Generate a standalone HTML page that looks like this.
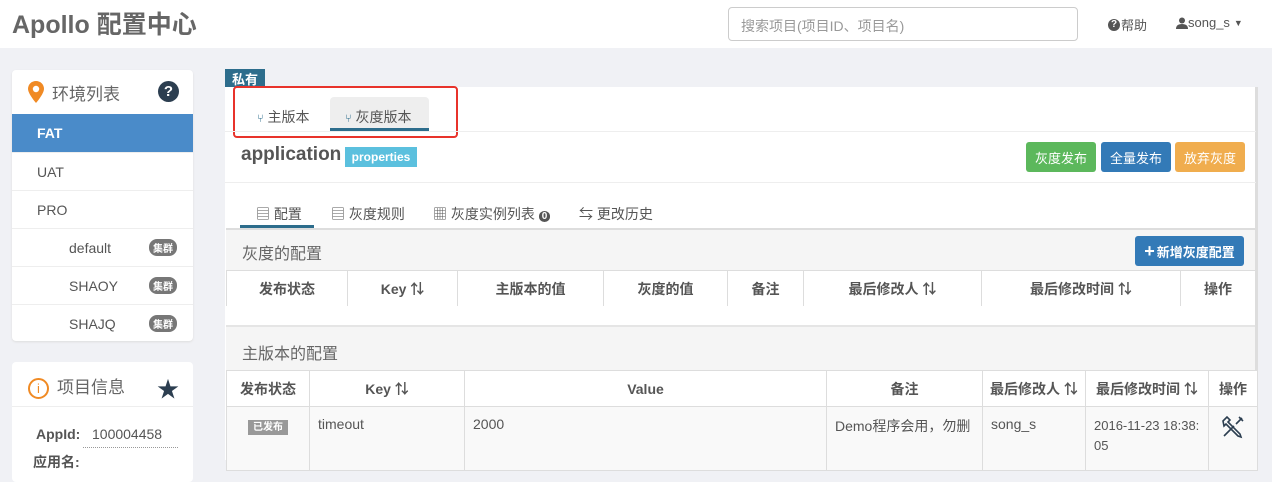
<!DOCTYPE html>
<html><head><meta charset="utf-8"><style>
*{box-sizing:border-box;margin:0;padding:0}
body{width:1272px;height:460px;overflow:hidden;background:#f0f1f5;font-family:"Liberation Sans","Noto Sans CJK SC",sans-serif;color:#555;position:relative;font-size:14px}
.a{position:absolute}
.hdr{left:0;top:0;width:1272px;height:48px;background:#fff}
.c{display:flex;align-items:center;justify-content:center}
.row{left:12px;width:181px;height:38px;border-top:1px solid #eee;display:flex;align-items:center;font-size:14px;color:#555}
.badge{background:#777;color:#fff;font-size:10px;border-radius:8px;padding:1px 4px;font-weight:bold;position:absolute;right:16px}
table{border-collapse:collapse;position:absolute;table-layout:fixed}
td{border:1px solid #ddd;font-size:14px;color:#555;text-align:center;vertical-align:middle}
th{border:1px solid #ddd;font-size:14px;color:#555;font-weight:bold;background:#fff;height:36px}
.btn{position:absolute;height:30px;color:#fff;font-size:13px;border-radius:3px;display:flex;align-items:center;justify-content:center}
</style></head><body>
<div class="a hdr"></div>
<div class="a" style="left:12px;top:5px;font-size:25px;font-weight:bold;color:#666">Apollo 配置中心</div>
<div class="a" style="left:728px;top:7px;width:350px;height:34px;border:1px solid #ccc;border-radius:4px;padding:8px 12px;font-size:14px;color:#999">搜索项目(项目ID、项目名)</div>
<div class="a" style="left:1108px;top:15px;font-size:13px;color:#555;display:flex;align-items:center"><span style="display:inline-block;width:12px;height:12px;border-radius:50%;background:#555;color:#fff;font-size:10px;font-weight:bold;text-align:center;line-height:12px;margin-right:1px">?</span>帮助</div>
<div class="a" style="left:1176px;top:15px;font-size:13px;color:#555;display:flex;align-items:center"><svg width="12" height="12" viewBox="0 0 12 12"><circle cx="6" cy="3.5" r="3" fill="#555"/><path d="M0 12 Q0 7 6 7 Q12 7 12 12Z" fill="#555"/></svg>song_s <span style="font-size:9px;margin-left:4px">▼</span></div>

<div class="a" style="left:12px;top:70px;width:181px;height:271px;background:#fff;border-radius:4px;box-shadow:0 1px 2px #ddd"></div>
<svg class="a" style="left:28px;top:81px" width="16" height="22" viewBox="0 0 16 22"><path d="M8 0C3.6 0 0 3.4 0 7.8 0 13 8 22 8 22S16 13 16 7.8C16 3.4 12.4 0 8 0Z" fill="#f08a24"/><circle cx="8" cy="8" r="3.2" fill="#fff"/></svg>
<div class="a" style="left:52px;top:80px;font-size:17px;color:#666">环境列表</div>
<div class="a c" style="left:158px;top:81px;width:21px;height:21px;border-radius:50%;background:#2c3e50;color:#fff;font-weight:bold;font-size:15px">?</div>
<div class="a row" style="top:114px;background:#4a8bc9;color:#fff;font-weight:bold;padding-left:25px;border:none">FAT</div>
<div class="a row" style="top:152px;padding-left:25px">UAT</div>
<div class="a row" style="top:190px;padding-left:25px">PRO</div>
<div class="a row" style="top:228px;padding-left:57px">default<span class="badge">集群</span></div>
<div class="a row" style="top:266px;padding-left:57px">SHAOY<span class="badge">集群</span></div>
<div class="a row" style="top:304px;padding-left:57px">SHAJQ<span class="badge">集群</span></div>

<div class="a" style="left:12px;top:362px;width:181px;height:120px;background:#fff;border-radius:4px"></div>
<div class="a" style="left:28px;top:373px;font-size:17px;color:#666"><span style="display:inline-block;width:21px;height:21px;border:2px solid #f08a24;border-radius:50%;color:#f08a24;font-size:13px;text-align:center;line-height:17px;margin-right:8px;vertical-align:middle">i</span>项目信息</div>
<div class="a" style="left:157px;top:372px;font-size:22px;color:#2c3e50">★</div>
<div class="a" style="left:12px;top:406px;width:181px;border-top:1px solid #eee"></div>
<div class="a" style="left:36px;top:426px;font-size:14px;color:#555"><b>AppId:</b>&nbsp;&nbsp; 100004458</div>
<div class="a" style="left:83px;top:447px;width:95px;border-top:1px dotted #999"></div>
<div class="a" style="left:33px;top:452px;font-size:14px;color:#555"><b>应用名:</b></div>

<div class="a c" style="left:225px;top:69px;width:40px;height:18px;background:#2d6d8c;color:#fff;font-size:13px;font-weight:bold">私有</div>
<div class="a" style="left:225px;top:87px;width:1033px;height:373px;background:#fff;border-right:3px solid #ddd"></div>
<div class="a" style="left:330px;top:97px;width:99px;height:34px;background:#eee;border-radius:4px 4px 0 0;border-bottom:3px solid #2d6d8c"></div>
<div class="a" style="left:257px;top:107px;font-size:14px;color:#555"><span style="font-size:11px;color:#2d6d8c">⑂</span> 主版本</div>
<div class="a" style="left:345px;top:107px;font-size:14px;color:#555"><span style="font-size:11px;color:#2d6d8c">⑂</span> 灰度版本</div>
<div class="a" style="left:233px;top:86px;width:225px;height:52px;border:2px solid #e8332b;border-radius:4px"></div>
<div class="a" style="left:225px;top:131px;width:1031px;border-top:1px solid #eee"></div>
<div class="a" style="left:241px;top:144px;font-size:19px;font-weight:bold;color:#555">application</div>
<div class="a c" style="left:345px;top:147px;width:72px;height:20px;background:#5bc0de;color:#fff;font-size:12px;font-weight:bold">properties</div>
<div class="btn" style="left:1026px;top:142px;width:70px;background:#5cb85c">灰度发布</div>
<div class="btn" style="left:1101px;top:142px;width:70px;background:#337ab7">全量发布</div>
<div class="btn" style="left:1175px;top:142px;width:70px;background:#f0ad4e">放弃灰度</div>
<div class="a" style="left:225px;top:182px;width:1031px;border-top:1px solid #eee"></div>
<div class="a" style="left:240px;top:202px;width:74px;height:26px;border-bottom:3px solid #2d6d8c"></div>
<div class="a" style="left:256px;top:204px;font-size:14px;color:#555">▤ 配置</div>
<div class="a" style="left:331px;top:204px;font-size:14px;color:#555">▤ 灰度规则</div>
<div class="a" style="left:433px;top:204px;font-size:14px;color:#555">▦ 灰度实例列表 <span style="background:#555;color:#fff;border-radius:50%;font-size:10px;padding:0 3px;font-weight:bold">0</span></div>
<div class="a" style="left:579px;top:204px;font-size:14px;color:#555">⇆ 更改历史</div>

<div class="a" style="left:226px;top:228px;width:1029px;height:232px;background:#f5f5f5;border-top:2px solid #ddd"></div>
<div class="a" style="left:242px;top:240px;font-size:16px;color:#666">灰度的配置</div>
<div class="btn" style="left:1135px;top:236px;width:109px;height:30px;background:#337ab7;font-weight:bold"><span style="font-size:18px;margin-right:2px">+</span>新增灰度配置</div>
<table style="left:226px;top:270px;width:1030px">
<tr><th style="width:121px">发布状态</th><th style="width:110px">Key ⇅</th><th style="width:146px">主版本的值</th><th style="width:124px">灰度的值</th><th style="width:76px">备注</th><th style="width:178px">最后修改人 ⇅</th><th style="width:199px">最后修改时间 ⇅</th><th>操作</th></tr>
</table>
<div class="a" style="left:226px;top:306px;width:1029px;height:21px;background:#fff;border-bottom:2px solid #e5e5e5"></div>
<div class="a" style="left:242px;top:340px;font-size:16px;color:#666">主版本的配置</div>
<table style="left:226px;top:370px;width:1032px">
<tr><th style="width:83px">发布状态</th><th style="width:155px">Key ⇅</th><th style="width:362px">Value</th><th style="width:156px">备注</th><th style="width:103px">最后修改人 ⇅</th><th style="width:123px">最后修改时间 ⇅</th><th>操作</th></tr>
<tr style="height:64px;background:#f9f9f9"><td style="vertical-align:top;padding-top:10px"><span style="background:#999;color:#fff;font-size:10px;font-weight:bold;padding:2px 5px">已发布</span></td><td style="text-align:left;vertical-align:top;padding:9px 8px">timeout</td><td style="text-align:left;vertical-align:top;padding:9px 8px">2000</td><td style="text-align:left;vertical-align:top;padding:9px 8px">Demo程序会用，勿删</td><td style="text-align:left;vertical-align:top;padding:9px 8px">song_s</td><td style="text-align:left;vertical-align:top;padding:9px 8px;line-height:20px;font-size:13px">2016-11-23 18:38:<br>05</td><td style="vertical-align:top;padding-top:8px"><svg width="24" height="24" viewBox="0 0 24 24" fill="none" stroke="#2c3e50" stroke-width="1.6"><path d="M3 21 L13 11 M15 9 L21 3 M18 2 L22 6 M2 6 L6 2 L9 5 L7 7 L19 19 L20 22 L17 21 L5 9 L3 11Z"/></svg></td></tr>
</table>
</body></html>
